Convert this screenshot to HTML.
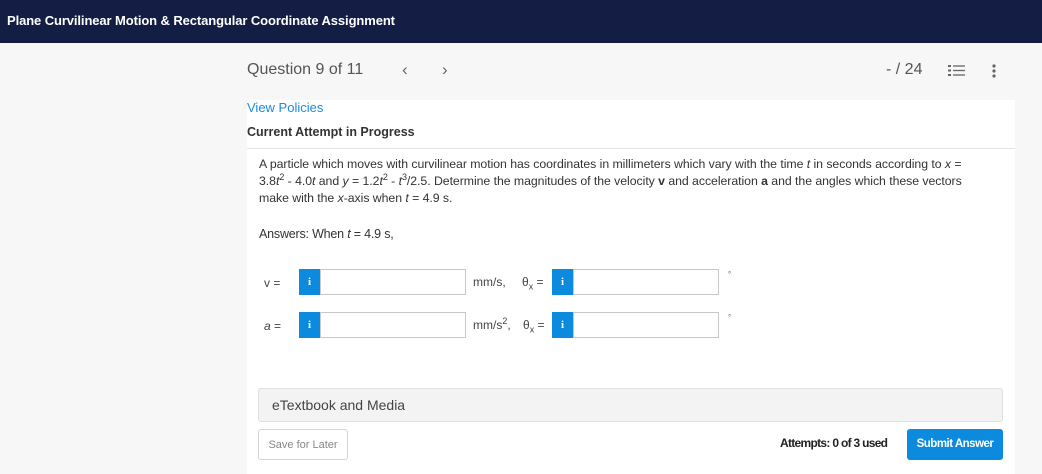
<!DOCTYPE html>
<html><head><meta charset="utf-8"><style>
*{margin:0;padding:0;box-sizing:border-box}
body{width:1042px;height:474px;overflow:hidden;background:#f7f7f7;font-family:"Liberation Sans",sans-serif;color:#333;position:relative}
.a{position:absolute;white-space:nowrap}
.hdr{left:0;top:0;width:1042px;height:43px;background:#141e45;color:#fff;font-weight:bold;font-size:13px;padding:13px 0 0 7px;letter-spacing:-0.1px}
.panel{left:247px;top:100px;width:768px;height:374px;background:#fff}
.info{width:21px;height:26px;background:#0b8ade;color:#fff;font-weight:bold;font-size:11px;text-align:center;line-height:26px;font-family:"Liberation Serif",serif}
.inp{height:26px;border:1px solid #c8c8c8;background:#fff}
.sm{font-size:12px;color:#444}
sup{font-size:9px;vertical-align:5px;line-height:0}
</style></head><body>
<div class="a hdr">Plane Curvilinear Motion &amp; Rectangular Coordinate Assignment</div>
<div class="a" style="left:247px;top:61px;font-size:16px;color:#555">Question 9 of 11</div>
<div class="a" style="left:402px;top:60px;font-size:17px;color:#666">&lsaquo;</div>
<div class="a" style="left:442px;top:60px;font-size:17px;color:#666">&rsaquo;</div>
<div class="a" style="left:886px;top:61px;font-size:16px;color:#555">- / 24</div>
<svg class="a" style="left:948px;top:64px" width="18" height="14"><g stroke="#666" stroke-width="1.3"><line x1="5" y1="2" x2="17" y2="2"/><line x1="5" y1="6.5" x2="17" y2="6.5"/><line x1="5" y1="11" x2="17" y2="11"/></g><g fill="#666"><rect x="0" y="1" width="3" height="2"/><rect x="0" y="5.5" width="3" height="2"/><rect x="0" y="10" width="3" height="2"/></g></svg>
<svg class="a" style="left:992px;top:64px" width="4" height="14" fill="#666"><circle cx="2" cy="2" r="1.6"/><circle cx="2" cy="7" r="1.6"/><circle cx="2" cy="12" r="1.6"/></svg>
<div class="a panel"></div>
<div class="a" style="left:247px;top:100px;font-size:13px;color:#1a8ce0">View Policies</div>
<div class="a" style="left:247px;top:125px;font-size:12.5px;font-weight:bold;color:#333">Current Attempt in Progress</div>
<div class="a" style="left:247px;top:148px;width:768px;height:1px;background:#e3e3e3"></div>
<div class="a" style="left:259px;top:156px;width:730px;white-space:normal;font-size:12.3px;line-height:17px;color:#333;letter-spacing:-0.05px">A particle which moves with curvilinear motion has coordinates in millimeters which vary with the time <i>t</i> in seconds according to <i>x</i> = 3.8<i>t</i><sup>2</sup> - 4.0<i>t</i> and <i>y</i> = 1.2<i>t</i><sup>2</sup> - <i>t</i><sup>3</sup>/2.5. Determine the magnitudes of the velocity <b>v</b> and acceleration <b>a</b> and the angles which these vectors make with the <i>x</i>-axis when <i>t</i> = 4.9 s.</div>
<div class="a" style="left:259px;top:227px;font-size:12.5px;letter-spacing:-0.2px">Answers: When <i>t</i> = 4.9 s,</div>
<div class="a sm" style="left:264px;top:276px">v =</div>
<div class="a info" style="left:299px;top:269px">i</div>
<div class="a inp" style="left:320px;top:269px;width:146px"></div>
<div class="a sm" style="left:473px;top:275px">mm/s,</div>
<div class="a sm" style="left:522px;top:275px">θ<sub style="font-size:9px">x</sub> =</div>
<div class="a info" style="left:552px;top:269px">i</div>
<div class="a inp" style="left:573px;top:269px;width:146px"></div>
<div class="a" style="left:728px;top:270px;font-size:8px;color:#666">°</div>
<div class="a sm" style="left:264px;top:319px"><i>a</i> =</div>
<div class="a info" style="left:299px;top:312px">i</div>
<div class="a inp" style="left:320px;top:312px;width:146px"></div>
<div class="a sm" style="left:473px;top:318px">mm/s<sup>2</sup>,</div>
<div class="a sm" style="left:523px;top:318px">θ<sub style="font-size:9px">x</sub> =</div>
<div class="a info" style="left:552px;top:312px">i</div>
<div class="a inp" style="left:573px;top:312px;width:146px"></div>
<div class="a" style="left:728px;top:313px;font-size:8px;color:#666">°</div>
<div class="a" style="left:258px;top:388px;width:745px;height:34px;background:#f3f3f3;border:1px solid #e0e0e0;border-radius:3px;font-size:14px;color:#444;padding:8px 0 0 13px">eTextbook and Media</div>
<div class="a" style="left:258px;top:429px;width:90px;height:31px;border:1px solid #d5d5d5;border-radius:3px;font-size:11px;color:#888;text-align:center;line-height:30px">Save for Later</div>
<div class="a" style="left:780px;top:436px;font-size:12px;color:#222;font-weight:bold;letter-spacing:-0.7px">Attempts: 0 of 3 used</div>
<div class="a" style="left:907px;top:429px;width:96px;height:31px;background:#0b8ade;border-radius:3px;font-size:11.5px;font-weight:bold;color:#fff;text-align:center;line-height:31px;letter-spacing:-0.5px">Submit Answer</div>
</body></html>
